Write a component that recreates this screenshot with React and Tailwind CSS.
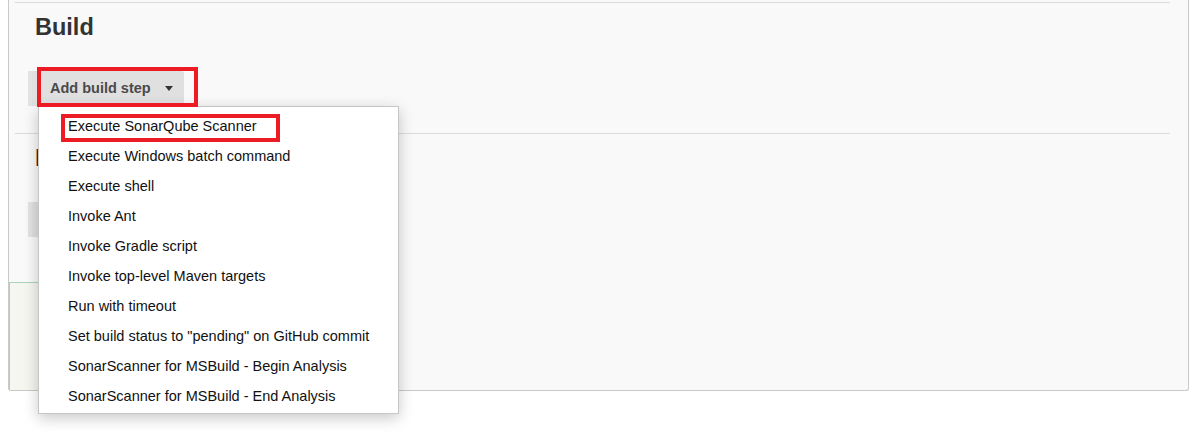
import React from 'react';

const steps = [
  'Execute SonarQube Scanner',
  'Execute Windows batch command',
  'Execute shell',
  'Invoke Ant',
  'Invoke Gradle script',
  'Invoke top-level Maven targets',
  'Run with timeout',
  'Set build status to "pending" on GitHub commit',
  'SonarScanner for MSBuild - Begin Analysis',
  'SonarScanner for MSBuild - End Analysis',
];

const StepButton = ({ label }) => (
  <div className="flex ml-[13px] h-[35px]">
    <div className="w-[4px] bg-[#e3e3e3]" />
    <div className="flex items-center pl-[18px] pr-[11px] bg-[#e0e0e0] rounded-r-[3px] text-[14.5px] font-bold text-[#4a4a4a] whitespace-nowrap">
      {label}
      <span className="ml-[14px] w-0 h-0 border-l-[4px] border-r-[4px] border-t-[5px] border-l-transparent border-r-transparent border-t-[#333]" />
    </div>
  </div>
);

const Section = ({ title, button }) => (
  <section>
    <div className="h-px bg-[#dcdcdc] mr-[18px]" />
    <h2 className="mt-[11px] ml-[20px] text-[23.5px] leading-[26px] font-bold text-[#333]">{title}</h2>
    <div className="mt-[31px]">
      <StepButton label={button} />
    </div>
  </section>
);

const App = () => {
  return (
    <div className="relative w-[1196px] h-[435px] bg-white overflow-hidden" style={{ fontFamily: '"Liberation Sans", Arial, sans-serif' }}>
      <div className="ml-[8px] w-[1181px] h-[391px] bg-[#f9f9f9] border-x border-b border-[#c9c9c9] rounded-b-[3px] flex flex-col">
        <div className="pl-[6px] pt-[2px]">
          <Section title="Build" button="Add build step" />
          <div className="mt-[27px]">
            <Section title="Post-build Actions" button="Add post-build action" />
          </div>
        </div>
        <div className="mt-auto w-[320px] h-[108px] bg-[#f4f6ef] border border-b-0 border-[#a9d4bb]" />
      </div>

      {/* dropdown menu */}
      <div className="absolute left-[38px] top-[106px] w-[361px] h-[308px] bg-white border border-[#c6c6c6] shadow-[0_4px_14px_rgba(0,0,0,0.22)] pt-[5px]">
        {steps.map((s) => (
          <div key={s} className="h-[30px] flex items-center pl-[29px] text-[14.5px] text-[#111] whitespace-nowrap">
            {s}
          </div>
        ))}
        <div className="absolute left-[22px] top-[7px] w-[219px] h-[28px] border-[4px] border-[#ed1c24]" />
      </div>

      {/* annotation around button */}
      <div className="absolute left-[37px] top-[67px] w-[161px] h-[40px] border-[4px] border-[#ed1c24]" />
    </div>
  );
};

export default App;
